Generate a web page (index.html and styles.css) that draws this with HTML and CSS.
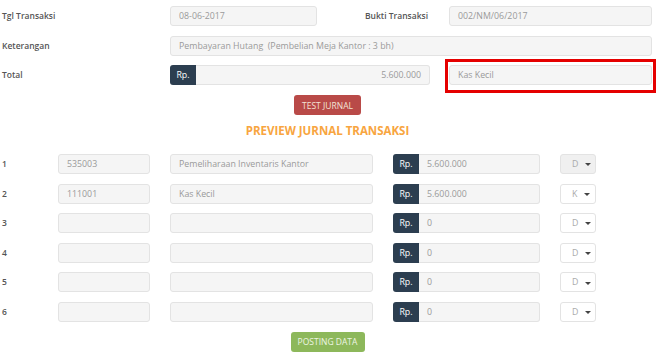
FILE: index.html
```html
<!DOCTYPE html>
<html>
<head>
<meta charset="utf-8">
<title>Jurnal Transaksi</title>
<link rel="stylesheet" href="styles.css">
</head>
<body>
<div class="page">
	<!-- header transaksi -->
	<div class="frow">
		<div class="lbl">Tgl Transaksi</div>
		<div class="fld w147">08-06-2017</div>
		<div class="lbl lbl2">Bukti Transaksi</div>
		<div class="fld w203">002/NM/06/2017</div>
	</div>
	<div class="frow">
		<div class="lbl">Keterangan</div>
		<div class="fld w482">Pembayaran Hutang&nbsp; (Pembelian Meja Kantor : 3 bh)</div>
	</div>
	<div class="frow">
		<div class="lbl">Total</div>
		<div class="igrp w260">
			<span class="addon">Rp.</span>
			<div class="fld right">5.600.000</div>
		</div>
		<div class="spc"></div>
		<div class="fld w203 mark">Kas Kecil<span class="hilite"></span></div>
	</div>
	<div class="center">
		<button class="btn red">TEST JURNAL</button>
	</div>
	<h3 class="title">PREVIEW JURNAL TRANSAKSI</h3>

	<div class="jrn">
		<div class="no">1</div>
		<div class="fld">535003</div>
		<div class="fld">Pemeliharaan Inventaris Kantor</div>
		<div class="igrp"><span class="addon">Rp.</span><div class="fld">5.600.000</div></div>
		<div class="sel gray">D <span class="caret"></span></div>

		<div class="no">2</div>
		<div class="fld">111001</div>
		<div class="fld">Kas Kecil</div>
		<div class="igrp"><span class="addon">Rp.</span><div class="fld">5.600.000</div></div>
		<div class="sel">K <span class="caret"></span></div>

		<div class="no">3</div>
		<div class="fld"></div>
		<div class="fld"></div>
		<div class="igrp"><span class="addon">Rp.</span><div class="fld">0</div></div>
		<div class="sel">D <span class="caret"></span></div>

		<div class="no">4</div>
		<div class="fld"></div>
		<div class="fld"></div>
		<div class="igrp"><span class="addon">Rp.</span><div class="fld">0</div></div>
		<div class="sel">D <span class="caret"></span></div>

		<div class="no">5</div>
		<div class="fld"></div>
		<div class="fld"></div>
		<div class="igrp"><span class="addon">Rp.</span><div class="fld">0</div></div>
		<div class="sel">D <span class="caret"></span></div>

		<div class="no">6</div>
		<div class="fld"></div>
		<div class="fld"></div>
		<div class="igrp"><span class="addon">Rp.</span><div class="fld">0</div></div>
		<div class="sel">D <span class="caret"></span></div>
	</div>

	<div class="center">
		<button class="btn green">POSTING DATA</button>
	</div>
</div>
</body>
</html>
```

FILE: styles.css
```css
body {
	margin:0;
	background:#fff;
	font-family:"Open Sans", "Noto Sans", Arial, sans-serif;
	font-size:8.5px;
	color:#555;
}

.page {
	width:655px;
	padding-top:6px;
}

.frow {
	display:flex;
	height:20px;
	margin-bottom:9.5px;
}

.lbl {
	width:168px;
	padding-left:2px;
	line-height:20px;
	font-weight:600;
	color:#555;
}

.lbl2 {
	width:84px;
	padding-left:48px;
}

.fld {
	box-sizing:border-box;
	height:20px;
	line-height:18px;
	background:#f5f5f5;
	border:1px solid #e3e3e3;
	border-radius:3px;
	padding:0 8px;
	color:#9a9a9a;
	font-size:8.8px;
	white-space:nowrap;
	overflow:hidden;
	position:relative;
}

.fld.right {
	text-align:right;
}

.w147 { width:147px; }
.w203 { width:203px; }
.w482 { width:482px; }
.w260 { width:260px; }

.spc {
	width:19px;
}

.mark {
	overflow:visible;
}

.hilite {
	position:absolute;
	left:-5px;
	top:-7px;
	width:205px;
	height:28px;
	border:3px solid #e50000;
}

.igrp {
	display:flex;
	height:20px;
}

.igrp .addon {
	width:26px;
	flex:none;
	background:#2c3e50;
	color:#fff;
	border-radius:3px 0 0 3px;
	text-align:center;
	line-height:20px;
	font-size:8.8px;
}

.igrp .fld {
	flex:1;
	border-left:none;
	border-radius:0 3px 3px 0;
}

.center {
	text-align:center;
}

.btn {
	height:20px;
	border:none;
	border-radius:3px;
	color:#fff;
	font-family:"Open Sans", "Noto Sans", Arial, sans-serif;
	font-size:8.5px;
	padding:0;
	cursor:pointer;
}

.btn.red {
	width:67px;
	margin-top:0.5px;
	background:#b94a48;
	color:#f3e3d6;
}

.btn.green {
	width:74px;
	margin-top:10px;
	background:#8db85b;
	color:#eef5e3;
}

.title {
	margin:6px 0 0;
	height:20px;
	line-height:20px;
	text-align:center;
	color:#f8a540;
	font-size:11.5px;
	font-weight:700;
}

.jrn {
	display:grid;
	grid-template-columns:38px 92px 203px 147px 36px;
	column-gap:20px;
	row-gap:9.6px;
	margin-top:13px;
}

.jrn .no {
	padding-left:2px;
	line-height:20px;
	font-weight:600;
}

.jrn .igrp .fld {
	padding-left:8px;
}

.sel {
	box-sizing:border-box;
	height:20px;
	line-height:18px;
	border:1px solid #e3e3e3;
	border-radius:3px;
	background:#fff;
	color:#aaa;
	font-size:8.8px;
	padding-left:11px;
}

.sel.gray {
	background:#f0f0f0;
}

.caret {
	display:inline-block;
	margin-left:4px;
	width:0;
	height:0;
	border-left:3px solid transparent;
	border-right:3px solid transparent;
	border-top:3px solid #444;
	vertical-align:middle;
}
```
